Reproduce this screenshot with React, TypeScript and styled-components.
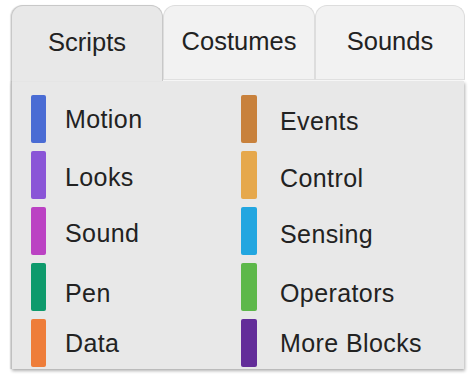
import React from "react";
import styled, { createGlobalStyle } from "styled-components";

const Global = createGlobalStyle`
  html, body { margin: 0; padding: 0; background: #ffffff; }
  body { font-family: "Liberation Sans", Arial, Helvetica, sans-serif; }
`;

const Page = styled.div`
  width: 474px;
  height: 382px;
  padding: 5px 0 0 11px;
  box-sizing: border-box;
`;

const Panel = styled.div`
  width: 454px;
  display: flex;
  flex-direction: column;
`;

const Tabs = styled.div`
  display: flex;
  height: 76px;
  align-items: stretch;
`;

const Tab = styled.div<{ $active?: boolean; $w: number }>`
  width: ${(p) => p.$w}px;
  box-sizing: border-box;
  display: flex;
  align-items: center;
  justify-content: center;
  font-size: 25.5px;
  color: #222;
  border-radius: 12px 12px 0 0;
  background: ${(p) => (p.$active ? "#e8e8e8" : "#f2f2f2")};
  border: 1px solid ${(p) => (p.$active ? "#c8c8c8" : "#dddddd")};
  border-bottom: ${(p) => (p.$active ? "none" : "1px solid #e0e0e0")};
  margin-bottom: ${(p) => (p.$active ? "0" : "1px")};
  padding-bottom: 2px;
  box-shadow: ${(p) => (p.$active ? "-1px 0 1px rgba(0,0,0,0.12)" : "none")};
  position: relative;
  z-index: ${(p) => (p.$active ? 1 : 0)};
`;

const Body = styled.div`
  width: 453px;
  height: 288px;
  box-sizing: border-box;
  background: #e8e8e8;
  border-left: 1px solid #c0c0c0;
  box-shadow: -1px 0 1px rgba(0, 0, 0, 0.12), 1px 2px 3px rgba(0, 0, 0, 0.3);
  padding: 14px 0 0 19px;
  display: grid;
  grid-template-columns: 210px 1fr;
  grid-auto-rows: 48px;
  row-gap: 8px;
`;

const Item = styled.div`
  display: flex;
  align-items: flex-start;
  color: #222;
`;

const Label = styled.span<{ $shift: number }>`
  font-size: 25px;
  letter-spacing: 0.4px;
  line-height: 48px;
  height: 48px;
  margin-top: ${(p) => p.$shift}px;
  white-space: nowrap;
`;

const Bar = styled.div<{ $color: string; $w: number }>`
  width: ${(p) => p.$w}px;
  height: 48px;
  border-radius: 2px;
  background: ${(p) => p.$color};
  margin-right: ${(p) => (p.$w === 15 ? 19 : 23)}px;
  flex-shrink: 0;
`;

type Cat = [string, string, number];

const left: Cat[] = [
  ["Motion", "#4a6cd4", 0],
  ["Looks", "#8a55d7", 2],
  ["Sound", "#bb42c3", 2],
  ["Pen", "#0e9a6c", 6],
  ["Data", "#ee7d3a", 0],
];
const right: Cat[] = [
  ["Events", "#c8813c", 2],
  ["Control", "#e6a84c", 3],
  ["Sensing", "#22a6e0", 3],
  ["Operators", "#5db84a", 6],
  ["More Blocks", "#632d99", 0],
];

export default function App() {
  const cells: React.ReactNode[] = [];
  for (let i = 0; i < 5; i++) {
    cells.push(
      <Item key={"l" + i}>
        <Bar $color={left[i][1]} $w={15} />
        <Label $shift={left[i][2]}>{left[i][0]}</Label>
      </Item>
    );
    cells.push(
      <Item key={"r" + i}>
        <Bar $color={right[i][1]} $w={16} />
        <Label $shift={right[i][2]}>{right[i][0]}</Label>
      </Item>
    );
  }
  return (
    <Page>
      <Global />
      <Panel>
        <Tabs>
          <Tab $active $w={152}>Scripts</Tab>
          <Tab $w={152}>Costumes</Tab>
          <Tab $w={150}>Sounds</Tab>
        </Tabs>
        <Body>{cells}</Body>
      </Panel>
    </Page>
  );
}
